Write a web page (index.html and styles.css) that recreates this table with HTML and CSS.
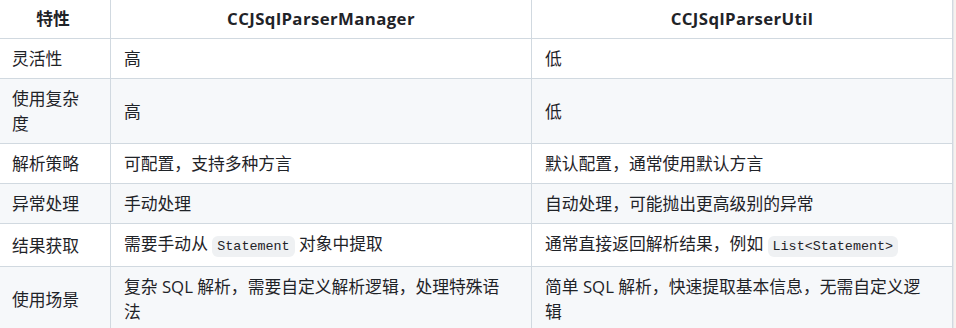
FILE: index.html
```
<!DOCTYPE html>
<html lang="zh-CN">
<head>
<meta charset="utf-8">
<title>CCJSqlParserManager vs CCJSqlParserUtil</title>
<link rel="stylesheet" href="styles.css">
</head>
<body>
<div class="page">
  <table class="cmp">
    <colgroup>
      <col class="c1">
      <col class="c2">
      <col class="c3">
    </colgroup>
    <thead>
      <tr>
        <th>特性</th>
        <th><span class="lat">CCJSqlParserManager</span></th>
        <th><span class="lat">CCJSqlParserUtil</span></th>
      </tr>
    </thead>
    <tbody>
      <tr>
        <td>灵活性</td>
        <td>高</td>
        <td>低</td>
      </tr>
      <tr class="alt">
        <td>使用复杂度</td>
        <td>高</td>
        <td>低</td>
      </tr>
      <tr>
        <td>解析策略</td>
        <td>可配置，支持多种方言</td>
        <td>默认配置，通常使用默认方言</td>
      </tr>
      <tr class="alt">
        <td>异常处理</td>
        <td>手动处理</td>
        <td>自动处理，可能抛出更高级别的异常</td>
      </tr>
      <tr>
        <td>结果获取</td>
        <td>需要手动从 <code>Statement</code> 对象中提取</td>
        <td>通常直接返回解析结果，例如 <code>List&lt;Statement&gt;</code></td>
      </tr>
      <tr class="alt">
        <td>使用场景</td>
        <td>复杂 SQL 解析，需要自定义解析逻辑，处理特殊语法</td>
        <td>简单 SQL 解析，快速提取基本信息，无需自定义逻辑</td>
      </tr>
    </tbody>
  </table>
</div>
</body>
</html>
```
FILE: styles.css
```
html, body {
  margin: 0;
  padding: 0;
}

body {
  background: #f6f2ee;
  font-family: "Open Sans", "Noto Sans CJK SC", sans-serif;
  color: #1f2328;
}

.page {
  display: flex;
}

.cmp {
  border-collapse: separate;
  border-spacing: 0;
  table-layout: fixed;
  width: 953px;
  background: #ffffff;
  font-size: 16.8px;
  line-height: 25px;
  border-right: 1px solid #e8e6ea;
}

.c1 { width: 111px; }
.c2 { width: 421px; }
.c3 { width: 421px; }

.cmp th,
.cmp td {
  box-sizing: border-box;
  border-right: 1px solid #d1d9e0;
  border-bottom: 1px solid #d1d9e0;
  padding: 7px 22px 7px 13px;
  vertical-align: middle;
  text-align: left;
}

.cmp th {
  padding: 6px 13px 7px;
  text-align: center;
  font-weight: 700;
}

.cmp th .lat {
  letter-spacing: 0.4px;
}

.cmp th:first-child,
.cmp td:first-child {
  padding-left: 12px;
  padding-right: 16px;
}

.cmp tr.alt td {
  background: #f6f8fa;
}

.cmp code {
  font-family: "Liberation Mono", "DejaVu Sans Mono", monospace;
  font-size: 13.4px;
  padding: 3px 5px;
  background: #eff1f3;
  border-radius: 6px;
}
```
